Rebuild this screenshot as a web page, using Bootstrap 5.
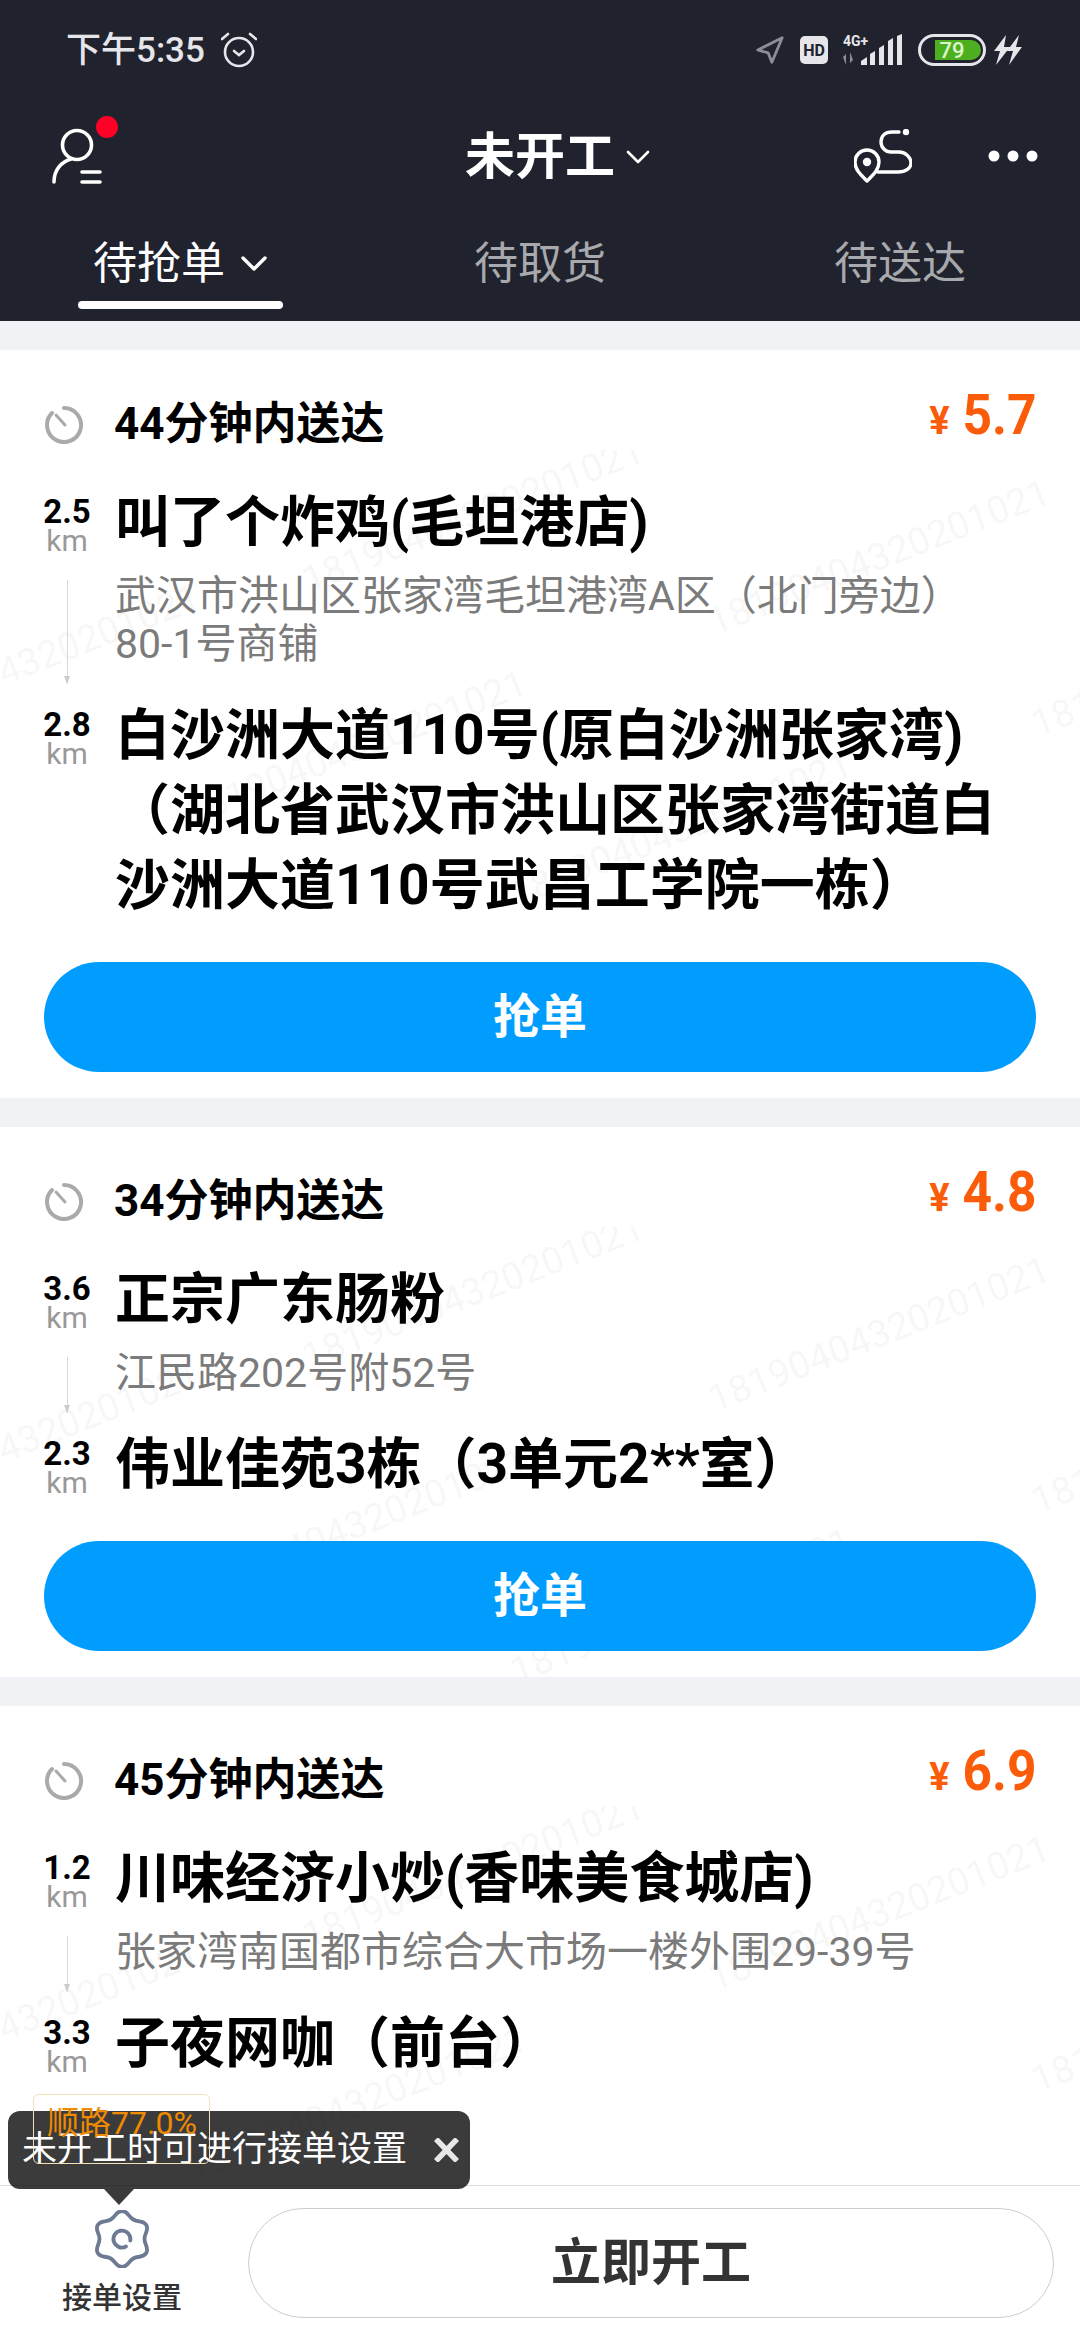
<!DOCTYPE html>
<html lang="zh-CN">
  <head>
    <meta charset="UTF-8" />
    <meta name="viewport" content="width=device-width, initial-scale=1.0" />
    <title>待抢单</title>
    <link href="https://cdn.jsdelivr.net/npm/bootstrap@5.3.0/dist/css/bootstrap.min.css" rel="stylesheet" />
    <style>
      html, body { width: 1080px; height: 2340px; overflow: hidden; }
      body { background: #f1f2f6; font-family: Roboto, "Noto Sans CJK SC", sans-serif; color: #000; }
      .app-screen { width: 1080px; height: 2340px; overflow: hidden; }
      .top-dark { background: #20232e; height: 321px; color: #fff; }
      .status-line { height: 100px; padding: 0 58px 0 66px; color: #e6e6ea; }
      .status-time { font-size: 35px; font-weight: 500; line-height: 1; }
      .st-gap { margin-left: 15px; }
      .st-first { margin-left: auto; }
      .nav-line { height: 112px; padding: 0 42px 0 52px; }
      .state-title { left: 465px; top: 27px; font-size: 50px; font-weight: 700; line-height: 60px; }
      .state-chev { margin-left: 11px; }
      .red-dot { width: 22px; height: 22px; background: #ff0027; border-radius: 50%; top: -12px; left: 44px; }
      .route-icon { margin-left: auto; margin-right: 76px; }
      .tab-cell { width: 360px; height: 109px; padding-top: 22px; font-size: 44px; line-height: 60px; color: #a8a9ad; }
      .tab-cell.is-on { color: #fff; }
      .tab-bar { width: 205px; height: 8px; background: #fff; border-radius: 4px; margin-top: 7px; }
      .order-card { background: #fff; margin-top: 29px; overflow: hidden; padding: 0 44px; }
      .order-card.first-order { height: 748px; }
      .order-card.second-order { height: 550px; }
      .order-card.third-order { height: 500px; }
      .card-body-wrap { z-index: 1; }
      .time-row { height: 60px; padding-top: 44px; box-sizing: content-box; }
      .time-text { font-size: 44px; font-weight: 700; line-height: 60px; margin-left: 30px; }
      .price-text { color: #fb5c0a; font-weight: 700; font-size: 56px; line-height: 60px; margin-top: -12px; display: inline-flex; align-items: baseline; }
      .price-num { display: inline-block; transform: scaleX(.92); transform-origin: right center; margin-left: -2px; }
      .price-yen { font-size: 38px; margin-right: 8px; }
      .stop-row { margin-top: 31px; }
      .stop-row + .stop-row { margin-top: 14px; }
      .dist-col { width: 46px; flex: none; margin-right: 25px; text-align: center; }
      .dist-num { font-size: 33px; font-weight: 700; line-height: 32px; margin-top: 11px; margin-left: -3px; margin-right: -3px; }
      .dist-km { font-size: 30px; color: #999; line-height: 30px; margin-top: -2px; }
      .dist-line { width: 1px; background: #d8d8d8; flex-grow: 1; margin: 24px auto 0; position: relative; min-height: 0; }
      .dist-line::after { content: ""; position: absolute; left: -3px; bottom: 0; border: 3px solid transparent; border-top: 8px solid #ccc; border-bottom: 0; }
      .stop-title { font-size: 55px; font-weight: 700; line-height: 75px; }
      .stop-addr { font-size: 41px; line-height: 48px; color: #7b7b7b; margin-top: 12px; margin-bottom: 16px; }
      .grab-btn { height: 110px; width: 992px; margin-top: 39px; border-radius: 55px; background: #009dff; border: 0; color: #fff; font-size: 47px; font-weight: 700; }
      .grab-btn:hover { background: #009dff; color: #fff; }
      .wm-layer { left: 0; right: 0; top: 100px; bottom: 0; overflow: hidden; pointer-events: none; }
      .wm-text { position: absolute; color: rgba(0, 0, 0, .05); font-size: 38px; line-height: 38px; white-space: nowrap; transform: rotate(-21.5deg); transform-origin: left bottom; }
      .wm-a { left: 717px; top: 153px; }
      .wm-b { left: 311px; top: 111px; }
      .wm-c { left: -133px; top: 258px; }
      .wm-d { left: 194px; top: 344px; }
      .wm-e { left: 1040px; top: 255px; }
      .wm-f { left: 519px; top: 425px; }
      .route-chip { border: 1px solid #f3dfb8; color: #f08a00; font-size: 32px; line-height: 56px; padding: 0 13px; border-radius: 6px; width: 177px; height: 70px; margin-top: 13px; margin-left: -11px; white-space: nowrap; }
      .bottom-bar { left: 0; top: 2185px; width: 1080px; height: 155px; background: #fff; border-top: 1px solid #ddd; }
      .setting-col { width: 172px; margin-left: 36px; }
      .setting-label { font-size: 30px; font-weight: 500; color: #333; line-height: 36px; margin-top: 12px; }
      .start-btn { width: 806px; height: 110px; margin-left: 40px; margin-top: 22px; border: 1px solid #ccc; border-radius: 55px; background: #fff; color: #333; font-size: 50px; font-weight: 700; }
      .tip-box { left: 8px; top: 2111px; width: 462px; height: 78px; background: rgba(0, 0, 0, .77); border-radius: 12px; color: #fff; font-size: 35px; padding: 0 11px 0 14px; }
      .tip-box::after { content: ""; position: absolute; left: 96px; top: 78px; border: 15px solid transparent; border-top: 16px solid rgba(0, 0, 0, .77); border-bottom: 0; }
    </style>
  </head>
  <body>
    <div class="app-screen position-relative">
      <div class="top-dark">
        <div class="status-line d-flex align-items-center">
          <span class="status-time">下午5:35</span>
          <svg class="ms-3" width="36" height="36" viewBox="0 0 36 36" fill="none" stroke="#e6e6ea" stroke-width="2.6" stroke-linecap="round">
            <circle cx="18" cy="20" r="14" /><path d="M13 19l5 4 5-4M1 7l6-5M35 7l-6-5" />
          </svg>
          <svg class="st-first" width="30" height="30" viewBox="0 0 32 32" fill="none" stroke="#8d8e95" stroke-width="3" stroke-linejoin="round">
            <path d="M29 3L3 16l11 3 4 10z" />
          </svg>
          <svg class="st-gap" width="28" height="28" viewBox="0 0 28 28">
            <rect width="28" height="28" rx="5" fill="#e6e6ea" />
            <text x="14" y="20" text-anchor="middle" font-family="Roboto" font-weight="700" font-size="16" fill="#20232e">HD</text>
          </svg>
          <svg class="st-gap" width="60" height="32" viewBox="0 0 60 32" fill="#e6e6ea">
            <text x="0" y="12" font-family="Roboto" font-weight="700" font-size="14">4G+</text>
            <path fill="#8d8e95" d="M3 31V20l-3 3zM7 18v11l3-3z" />
            <path d="M18 31v-4l6-4v8zM27 31V20l5-3v14zM36 31V14l5-3v20zM45 31V7l5-3v27zM54 31V2l5-2v31z" />
          </svg>
          <svg class="st-gap" width="68" height="32" viewBox="0 0 68 32">
            <rect x="1.5" y="1.5" width="65" height="29" rx="14.5" fill="none" stroke="#e6e6ea" stroke-width="3" />
            <path d="M17 6h36a10 10 0 010 20H17z" fill="#4caf1f" />
            <text x="34" y="24" text-anchor="middle" font-family="Roboto" font-size="22" font-weight="500" fill="#dff5cc">79</text>
          </svg>
          <svg class="ms-2" width="28" height="32" viewBox="0 0 28 32" fill="#e6e6ea">
            <path d="M12 1L0 17h6L2 31 16 13h-6zM25 1L13 17h6l-4 14L28 13h-6z" />
          </svg>
        </div>
        <div class="nav-line d-flex align-items-center position-relative">
          <div class="position-relative">
            <svg class="d-block" width="52" height="56" viewBox="0 0 52 56" fill="none" stroke="#fff" stroke-width="3.6" stroke-linecap="round">
              <circle cx="25" cy="17" r="14.500" /><path d="M19 31C9 34 2 42 2 54M30 44h18M30 54h18" />
            </svg>
            <span class="red-dot position-absolute"></span>
          </div>
          <div class="state-title position-absolute d-flex align-items-center">未开工
            <svg class="state-chev" width="24" height="14" viewBox="0 0 24 14" fill="none" stroke="#fff" stroke-width="2.6" stroke-linecap="round" stroke-linejoin="round">
              <path d="M2 2l10 10L22 2" />
            </svg>
          </div>
          <svg class="route-icon" width="58" height="54" viewBox="0 0 58 54" fill="none" stroke="#fff" stroke-width="3.4" stroke-linecap="round" stroke-linejoin="round">
            <path d="M13 52C7 46 1 41 1 33a12 12 0 0124 0c0 8-6 13-12 19zM24 43h20c8 0 13-4 13-9s-5-11-12-11h-8c-5 0-10-4-10-10s4-10 11-10h7" />
            <circle cx="13" cy="33" r="2.500" fill="#fff" /><circle cx="52" cy="3" r="1.500" fill="#fff" />
          </svg>
          <svg width="50" height="12" viewBox="0 0 50 12" fill="#fff"><circle cx="6" cy="6" r="5.500" /><circle cx="25" cy="6" r="5.500" /><circle cx="44" cy="6" r="5.500" /></svg>
        </div>
        <div class="d-flex">
          <div class="tab-cell is-on d-flex flex-column align-items-center">
            <div class="d-flex align-items-center">待抢单
              <svg class="ms-3" width="26" height="16" viewBox="0 0 26 16" fill="none" stroke="#fff" stroke-width="3.4" stroke-linecap="round" stroke-linejoin="round"><path d="M2 2l11 11L24 2" /></svg>
            </div>
            <div class="tab-bar"></div>
          </div>
          <div class="tab-cell text-center">待取货</div>
          <div class="tab-cell text-center">待送达</div>
        </div>
      </div>

      <div class="order-card first-order position-relative">
        <div class="wm-layer position-absolute">
          <div class="wm-text wm-a">18190404320201021</div>
          <div class="wm-text wm-b">18190404320201021</div>
          <div class="wm-text wm-c">18190404320201021</div>
          <div class="wm-text wm-d">18190404320201021</div>
          <div class="wm-text wm-e">18190404320201021</div>
          <div class="wm-text wm-f">18190404320201021</div>
        </div>
        <div class="card-body-wrap position-relative">
          <div class="time-row d-flex align-items-center">
            <svg width="40" height="40" viewBox="0 0 40 40" fill="none" stroke="#aaa" stroke-width="4" stroke-linecap="round"><path d="M20 4A17 17 0 1 1 8 9" /><path d="M12 11l9 10" stroke-width="3" /></svg>
            <span class="time-text">44分钟内送达</span>
            <span class="price-text ms-auto"><span class="price-yen">¥</span><span class="price-num">5.7</span></span>
          </div>
          <div class="stop-row d-flex">
            <div class="dist-col d-flex flex-column">
              <div class="dist-num">2.5</div><div class="dist-km">km</div><div class="dist-line"></div>
            </div>
            <div>
              <div class="stop-title">叫了个炸鸡(毛坦港店)</div>
              <div class="stop-addr">武汉市洪山区张家湾毛坦港湾A区（北门旁边）<br />80-1号商铺</div>
            </div>
          </div>
          <div class="stop-row d-flex">
            <div class="dist-col"><div class="dist-num">2.8</div><div class="dist-km">km</div></div>
            <div class="stop-title">白沙洲大道110号(原白沙洲张家湾)<br />（湖北省武汉市洪山区张家湾街道白<br />沙洲大道110号武昌工学院一栋）</div>
          </div>
          <button class="btn grab-btn d-block">抢单</button>
        </div>
      </div>

      <div class="order-card second-order position-relative">
        <div class="wm-layer position-absolute">
          <div class="wm-text wm-a">18190404320201021</div>
          <div class="wm-text wm-b">18190404320201021</div>
          <div class="wm-text wm-c">18190404320201021</div>
          <div class="wm-text wm-d">18190404320201021</div>
          <div class="wm-text wm-e">18190404320201021</div>
          <div class="wm-text wm-f">18190404320201021</div>
        </div>
        <div class="card-body-wrap position-relative">
          <div class="time-row d-flex align-items-center">
            <svg width="40" height="40" viewBox="0 0 40 40" fill="none" stroke="#aaa" stroke-width="4" stroke-linecap="round"><path d="M20 4A17 17 0 1 1 8 9" /><path d="M12 11l9 10" stroke-width="3" /></svg>
            <span class="time-text">34分钟内送达</span>
            <span class="price-text ms-auto"><span class="price-yen">¥</span><span class="price-num">4.8</span></span>
          </div>
          <div class="stop-row d-flex">
            <div class="dist-col d-flex flex-column">
              <div class="dist-num">3.6</div><div class="dist-km">km</div><div class="dist-line"></div>
            </div>
            <div>
              <div class="stop-title">正宗广东肠粉</div>
              <div class="stop-addr">江民路202号附52号</div>
            </div>
          </div>
          <div class="stop-row d-flex">
            <div class="dist-col"><div class="dist-num">2.3</div><div class="dist-km">km</div></div>
            <div class="stop-title">伟业佳苑3栋（3单元2**室）</div>
          </div>
          <button class="btn grab-btn d-block">抢单</button>
        </div>
      </div>

      <div class="order-card third-order position-relative">
        <div class="wm-layer position-absolute">
          <div class="wm-text wm-a">18190404320201021</div>
          <div class="wm-text wm-b">18190404320201021</div>
          <div class="wm-text wm-c">18190404320201021</div>
          <div class="wm-text wm-d">18190404320201021</div>
          <div class="wm-text wm-e">18190404320201021</div>
        </div>
        <div class="card-body-wrap position-relative">
          <div class="time-row d-flex align-items-center">
            <svg width="40" height="40" viewBox="0 0 40 40" fill="none" stroke="#aaa" stroke-width="4" stroke-linecap="round"><path d="M20 4A17 17 0 1 1 8 9" /><path d="M12 11l9 10" stroke-width="3" /></svg>
            <span class="time-text">45分钟内送达</span>
            <span class="price-text ms-auto"><span class="price-yen">¥</span><span class="price-num">6.9</span></span>
          </div>
          <div class="stop-row d-flex">
            <div class="dist-col d-flex flex-column">
              <div class="dist-num">1.2</div><div class="dist-km">km</div><div class="dist-line"></div>
            </div>
            <div>
              <div class="stop-title">川味经济小炒(香味美食城店)</div>
              <div class="stop-addr">张家湾南国都市综合大市场一楼外围29-39号</div>
            </div>
          </div>
          <div class="stop-row d-flex">
            <div class="dist-col"><div class="dist-num">3.3</div><div class="dist-km">km</div></div>
            <div class="stop-title">子夜网咖（前台）</div>
          </div>
          <div class="route-chip">顺路77.0%</div>
        </div>
      </div>

      <div class="bottom-bar position-absolute d-flex">
        <div class="setting-col d-flex flex-column align-items-center">
          <svg class="mt-4" width="54" height="58" viewBox="0 0 54 58" fill="none" stroke="#6d7a92" stroke-width="3.8" stroke-linecap="round">
            <path d="M27 1C33 1 33.050 6.510 38.250 9.510C43.450 12.510 48.250 9.800 51.250 15C54.250 20.200 49.500 23 49.500 29C49.500 35 54.250 37.800 51.250 43C48.250 48.200 43.450 45.490 38.250 48.490C33.050 51.490 33 57 27 57C21 57 20.950 51.490 15.750 48.490C10.550 45.490 5.750 48.200 2.750 43C-.25 37.800 4.500 35 4.500 29C4.500 23 -.25 20.200 2.750 15C5.750 9.800 10.550 12.510 15.750 9.510C20.950 6.510 21 1 27 1z" />
            <path d="M35.300 30.500A8.500 8.500 0 1 0 31 36.500" />
          </svg>
          <div class="setting-label">接单设置</div>
        </div>
        <button class="btn start-btn">立即开工</button>
      </div>

      <div class="tip-box position-absolute d-flex align-items-center justify-content-between">
        <span>未开工时可进行接单设置</span>
        <svg width="25" height="24" viewBox="0 0 25 24" fill="none" stroke="#e8e8e8" stroke-width="5.500"><path d="M2 1l21 22M23 1L2 23" /></svg>
      </div>
    </div>
    <script src="https://cdn.jsdelivr.net/npm/bootstrap@5.3.0/dist/js/bootstrap.bundle.min.js"></script>
  </body>
</html>
